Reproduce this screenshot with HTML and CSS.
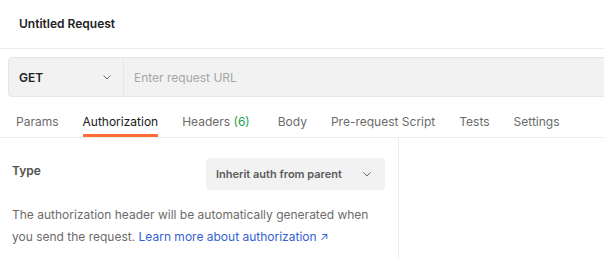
FILE: index.html
```html
<!DOCTYPE html>
<html lang="en">
<head>
    <meta charset="UTF-8">
    <meta name="viewport" content="width=device-width, initial-scale=1.0">
    <title>Untitled Request</title>
    <link rel="stylesheet" href="styles.css">
</head>
<body>
    <div class="request-header">
        <h1 class="request-title">Untitled Request</h1>
    </div>

    <div class="url-bar">
        <div class="method-select">
            <span class="method-name">GET</span>
            <svg class="chevron" width="12" height="12" viewBox="0 0 12 12"><path d="M2.5 4.5 6 8l3.5-3.5" fill="none" stroke="#6b6b6b" stroke-width="1"/></svg>
        </div>
        <div class="url-input">Enter request URL</div>
    </div>

    <nav class="tabs">
        <div class="tab"><span class="tab-label">Params</span></div>
        <div class="tab active"><span class="tab-label">Authorization</span></div>
        <div class="tab tab-wide"><span class="tab-label">Headers&nbsp;<span class="tab-count">(6)</span></span></div>
        <div class="tab"><span class="tab-label">Body</span></div>
        <div class="tab"><span class="tab-label">Pre-request Script</span></div>
        <div class="tab"><span class="tab-label">Tests</span></div>
        <div class="tab"><span class="tab-label">Settings</span></div>
    </nav>

    <div class="auth-panel">
        <div class="auth-config">
            <div class="auth-type-row">
                <span class="auth-type-label">Type</span>
                <div class="auth-dropdown">
                    <span>Inherit auth from parent</span>
                    <svg class="chevron" width="12" height="12" viewBox="0 0 12 12"><path d="M2.5 4.5 6 8l3.5-3.5" fill="none" stroke="#6b6b6b" stroke-width="1"/></svg>
                </div>
            </div>
            <p class="auth-help">
                The authorization header will be automatically generated when you send the request.
                <a class="auth-link" href="#">Learn more about authorization&nbsp;<span class="arrow">&#8599;</span></a>
            </p>
        </div>
        <div class="auth-editor"></div>
    </div>
</body>
</html>
```

FILE: styles.css
```css
* {
    margin: 0;
    padding: 0;
    box-sizing: border-box;
}

body {
    font-family: Inter, "Noto Sans", sans-serif;
    background: #ffffff;
    color: #212121;
    width: 604px;
    height: 259px;
    overflow: hidden;
}

.request-header {
    height: 49px;
    padding: 0 19px;
    display: flex;
    align-items: center;
    border-bottom: 1px solid #ededed;
}

.request-title {
    font-size: 12px;
    font-weight: 600;
    color: #212121;
    margin-top: -2px;
}

.url-bar {
    display: flex;
    height: 40px;
    margin: 8px -20px 0 8px;
    background: #f2f2f2;
    border: 1px solid #e6e6e6;
    border-radius: 4px;
}

.method-select {
    width: 115px;
    display: flex;
    align-items: center;
    justify-content: space-between;
    padding: 0 10px;
    border-right: 1px solid #e6e6e6;
}

.method-name {
    font-size: 12px;
    font-weight: 600;
    color: #212121;
}

.url-input {
    flex: 1;
    display: flex;
    align-items: center;
    padding: 0 10px;
    font-size: 12px;
    color: #a6a6a6;
}

.tabs {
    display: flex;
    padding: 0 4px;
    height: 41px;
    border-bottom: 1px solid #ededed;
}

.tab {
    padding: 0 12px;
    display: flex;
    font-size: 12px;
    color: #6b6b6b;
    white-space: nowrap;
}

.tab-wide {
    padding-right: 16px;
}

.tab-label {
    display: flex;
    align-items: center;
    padding-top: 11px;
    border-bottom: 3px solid transparent;
}

.tab.active .tab-label {
    color: #212121;
    border-bottom-color: #ff6c37;
}

.tab-count {
    color: #26a04f;
}

.auth-panel {
    display: flex;
    height: 121px;
}

.auth-config {
    width: 399px;
    padding: 20px 12px 0 12px;
    border-right: 1px solid #ededed;
}

.auth-type-row {
    display: flex;
    justify-content: space-between;
    align-items: flex-start;
}

.auth-type-label {
    font-size: 12px;
    font-weight: 600;
    color: #505050;
    margin-top: 5px;
}

.auth-dropdown {
    width: 179px;
    height: 32px;
    margin-right: 1px;
    display: flex;
    align-items: center;
    justify-content: space-between;
    padding: 0 12px 0 10px;
    background: #f2f2f2;
    border-radius: 4px;
    font-size: 11px;
    font-weight: 600;
    color: #5a5a5a;
}

.auth-help {
    margin-top: 14px;
    font-size: 12px;
    line-height: 22px;
    color: #6b6b6b;
}

.auth-link {
    color: #3561d4;
    text-decoration: none;
}

.arrow {
    font-size: 11px;
}

.auth-editor {
    flex: 1;
}
```
